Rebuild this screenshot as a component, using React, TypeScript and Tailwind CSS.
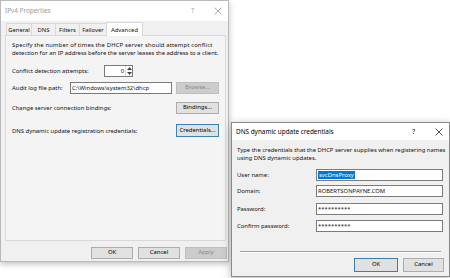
import React from "react";

function XIcon({ color }: { color: string }) {
  return (
    <svg width="8" height="8" viewBox="0 0 8 8">
      <path d="M0.5 0.5 L7.5 7.5 M7.5 0.5 L0.5 7.5" stroke={color} strokeWidth="0.8" fill="none" />
    </svg>
  );
}

function Btn({ label, w = "w-[42px]", h = "h-[12px]", disabled = false, def = false }: { label: string; w?: string; h?: string; disabled?: boolean; def?: boolean }) {
  const cls = disabled
    ? "bg-[#cccccc] border-[#bfbfbf] text-[#8a8a8a]"
    : def
    ? "bg-[#e1e1e1] border-[#3c7fb1] text-black"
    : "bg-[#e1e1e1] border-[#adadad] text-black";
  return (
    <div className={`${w} ${h} border ${cls} flex items-center justify-center leading-none`}>{label}</div>
  );
}

export default function App() {
  const tabs = [
    { t: "General", w: "w-[26px]" },
    { t: "DNS", w: "w-[25px]" },
    { t: "Filters", w: "w-[25px]" },
    { t: "Failover", w: "w-[28px]" },
  ];
  return (
    <div className="relative w-[450px] h-[278px] bg-white overflow-hidden font-['Noto_Sans',sans-serif] text-[5.9px] leading-[8px] text-[#111111]">
      {/* Main dialog */}
      <div className="absolute left-0 top-0 w-[229px] h-[262px] bg-[#f0f0f0] border border-[#b9b9b9] shadow-[0_2px_6px_rgba(0,0,0,0.25)] flex flex-col">
        <div className="h-[20px] bg-white flex items-center pl-[4px] pr-[6px] text-[#9a9a9a] text-[6.4px]">
          <span>IPv4 Properties</span>
          <span className="ml-auto mr-[20px]">?</span>
          <XIcon color="#9a9a9a" />
        </div>
        <div className="flex pl-[5px] h-[13px] items-end mt-[1px]">
          {tabs.map((x) => (
            <div key={x.t} className={`${x.w} h-[12px] border border-b-0 border-[#d9d9d9] -mr-[1px] bg-[#f0f0f0] flex items-center justify-center`}>{x.t}</div>
          ))}
          <div className="w-[37px] h-[14px] border border-b-0 border-[#d9d9d9] bg-white flex items-center justify-center relative z-10 -mb-[1px]">Advanced</div>
        </div>
        <div className="ml-[4px] w-[221px] h-[206px] border border-[#d9d9d9] bg-[#f4f4f4] pl-[6px] pr-[6px] pt-[5px] flex flex-col">
          <div className="whitespace-nowrap">
            <div className="tracking-[0.15px]">Specify the number of times the DHCP server should attempt conflict</div>
            <div>detection for an IP address before the server leases the address to a client.</div>
          </div>
          <div className="flex items-center mt-[8px] h-[12px]">
            <span>Conflict detection attempts:</span>
            <div className="ml-auto mr-[86px] w-[29px] h-[12px] bg-white border border-[#7a7a7a] flex items-center justify-end">
              <span className="pr-[1px]">0</span>
              <div className="w-[7px] h-full flex flex-col border-l border-[#dcdcdc]">
                <div className="flex-1 flex items-center justify-center"><svg width="5" height="3" viewBox="0 0 5 3"><path d="M0 3 L2.5 0 L5 3 Z" fill="#444" /></svg></div>
                <div className="flex-1 flex items-center justify-center"><svg width="5" height="3" viewBox="0 0 5 3"><path d="M0 0 L2.5 3 L5 0 Z" fill="#444" /></svg></div>
              </div>
            </div>
          </div>
          <div className="flex items-center mt-[5px] h-[12px]">
            <span>Audit log file path:</span>
            <div className="ml-auto w-[102px] h-[12px] bg-white border border-[#7a7a7a] flex items-center pl-[1px]">C:\Windows\system32\dhcp</div>
            <div className="ml-[4px]"><Btn label="Browse..." w="w-[43px]" disabled /></div>
          </div>
          <div className="flex items-center mt-[8px] h-[12px]">
            <span>Change server connection bindings:</span>
            <div className="ml-auto"><Btn label="Bindings..." w="w-[43px]" /></div>
          </div>
          <div className="flex items-center mt-[10px] h-[13px]">
            <span>DNS dynamic update registration credentials:</span>
            <div className="ml-auto"><Btn label="Credentials..." w="w-[43px]" h="h-[13px]" def /></div>
          </div>
        </div>
        <div className="flex justify-end gap-[5px] mt-[6px] pr-[1px]">
          <Btn label="OK" />
          <Btn label="Cancel" />
          <Btn label="Apply" disabled />
        </div>
      </div>

      {/* Credentials dialog */}
      <div className="absolute left-[231px] top-[122px] w-[219px] h-[155px] bg-[#f0f0f0] border border-[#8a8a8a] shadow-[0_2px_8px_rgba(0,0,0,0.3)] flex flex-col">
        <div className="h-[17px] bg-white flex items-center pl-[4px] pr-[6px] text-black text-[6.4px]">
          <span>DNS dynamic update credentials</span>
          <span className="ml-auto mr-[20px]">?</span>
          <XIcon color="#222" />
        </div>
        <div className="pl-[5px] pr-[5px] pt-[6px] flex flex-col">
          <div className="whitespace-nowrap">
            <div>Type the credentials that the DHCP server supplies when registering names</div>
            <div>using DNS dynamic updates.</div>
          </div>
          {[
            { l: "User name:", v: "svcDnsProxy", sel: true, mt: "mt-[7px]" },
            { l: "Domain:", v: "ROBERTSONPAYNE.COM", mt: "mt-[4px]" },
            { l: "Password:", v: "**********", mt: "mt-[6px]" },
            { l: "Confirm password:", v: "**********", mt: "mt-[5px]" },
          ].map((r) => (
            <div key={r.l} className={`flex items-center h-[12px] ${r.mt}`}>
              <span>{r.l}</span>
              <div className="ml-auto mr-[1px] w-[127px] h-[12px] bg-white border border-[#7a7a7a] flex items-center pl-[1px]">
                {r.sel ? <span className="bg-[#0078d7] text-white px-[1px]">{r.v}</span> : <span>{r.v}</span>}
              </div>
            </div>
          ))}
          <div className="mt-[19px] mx-[3px] h-[1px] bg-[#a0a0a0] border-b border-white box-content" />
          <div className="flex justify-end gap-[5px] mt-[5px]">
            <Btn label="OK" w="w-[44px]" h="h-[14px]" def />
            <Btn label="Cancel" w="w-[41px]" h="h-[14px]" />
          </div>
        </div>
      </div>
    </div>
  );
}
